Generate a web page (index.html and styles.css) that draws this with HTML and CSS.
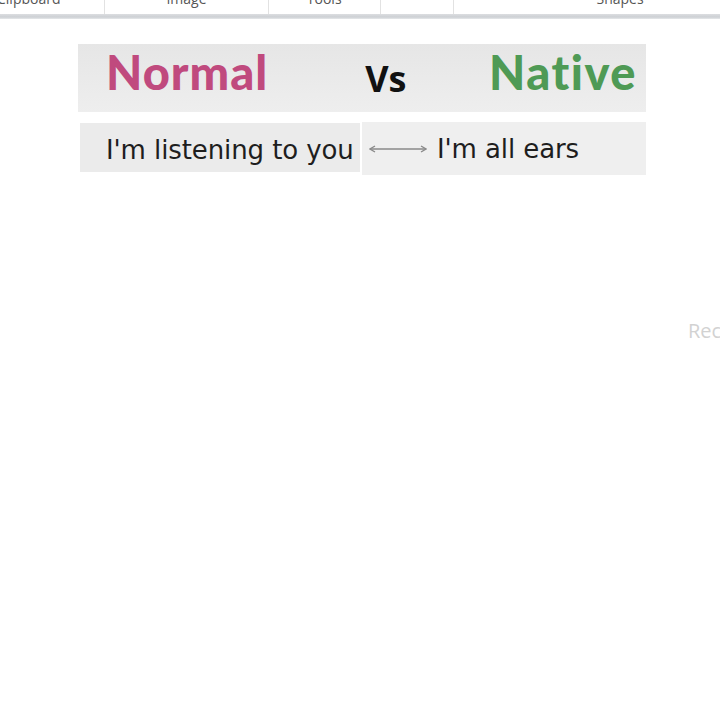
FILE: index.html
```html
<!DOCTYPE html>
<html>
<head>
<meta charset="utf-8">
<link rel="stylesheet" href="styles.css">
</head>
<body>
<div class="toolbar">
  <div class="group g1"><span>Clipboard</span></div>
  <div class="group g2"><span>Image</span></div>
  <div class="group g3"><span>Tools</span></div>
  <div class="group g4"></div>
  <div class="group g5"><span>Shapes</span></div>
</div>
<div class="rule"></div>
<div class="canvas">
  <div class="card">
    <div class="header">
      <span class="normal">Normal</span>
      <span class="vs">Vs</span>
      <span class="native">Native</span>
    </div>
    <div class="row">
      <div class="cell left">I'm listening to you</div>
      <div class="cell right">
        <svg class="arrow" width="58" height="10" viewBox="0 0 58 10">
          <path d="M1 5 H57" stroke="#8a8a8a" stroke-width="1.4"/>
          <path d="M6 2 L1 5 L6 8" fill="none" stroke="#8a8a8a" stroke-width="1.4"/>
          <path d="M52 2 L57 5 L52 8" fill="none" stroke="#8a8a8a" stroke-width="1.4"/>
        </svg>
        <span>I'm all ears</span>
      </div>
    </div>
  </div>
  <div class="rec">Rec</div>
</div>
</body>
</html>
```
FILE: styles.css
```css
html, body {
  margin: 0;
  padding: 0;
  background: #ffffff;
  width: 720px;
  height: 720px;
  overflow: hidden;
}
.toolbar {
  display: flex;
  height: 14px;
  background: #ffffff;
  overflow: hidden;
  font-family: "Open Sans", sans-serif;
  font-size: 14px;
  color: #555;
}
.group {
  position: relative;
  border-right: 1px solid #e2e2e2;
  display: flex;
  justify-content: center;
}
.group span {
  margin-top: -11px;
  line-height: 20px;
}
.g1 { width: 105px; justify-content: flex-start; }
.g1 span { margin-left: -3px; }
.g2 { width: 163px; }
.g3 { width: 112px; }
.g4 { width: 73px; }
.g5 { width: 267px; border-right: none; justify-content: flex-start; }
.g5 span { margin-left: 142px; }
.rule {
  height: 5px;
  background: linear-gradient(#dcdee1, #cdd0d4 60%, #e6e8ea);
}
.canvas {
  position: relative;
  height: 701px;
  background: #ffffff;
}
.card {
  margin-left: 78px;
  padding-top: 25px;
  width: 568px;
}
.header {
  height: 68px;
  background: linear-gradient(#e6e6e6, #eeeeee);
  display: flex;
  align-items: center;
  font-family: "Lato", sans-serif;
  font-weight: 900;
}
.normal {
  margin-left: 28px;
  font-size: 47px;
  color: #c04a7e;
  letter-spacing: 1px;
  margin-top: -12px;
}
.vs {
  margin-left: 97px;
  font-family: "Open Sans", sans-serif;
  font-weight: 700;
  font-size: 36px;
  color: #111;
  margin-top: 0px;
}
.native {
  margin-left: auto;
  margin-right: 9px;
  font-size: 47px;
  color: #4f9a55;
  letter-spacing: 1.5px;
  margin-top: -12px;
}
.row {
  display: flex;
  margin-top: 10px;
  gap: 2px;
}
.cell {
  display: flex;
  align-items: center;
  font-family: "DejaVu Sans", sans-serif;
  font-size: 26px;
  color: #1e1e1e;
}
.left {
  width: 280px;
  height: 49px;
  margin-left: 2px;
  background: #ebebeb;
  padding-left: 26px;
  box-sizing: border-box;
  margin-top: 1px;
  padding-top: 4px;
}
.left, .right span { letter-spacing: -0.1px; }
.right {
  width: 284px;
  height: 53px;
  background: #efefef;
  padding-left: 7px;
  box-sizing: border-box;
}
.arrow {
  margin-right: 10px;
}
.rec {
  position: absolute;
  left: 688px;
  top: 298px;
  font-family: "Open Sans", sans-serif;
  font-size: 20px;
  color: #d2d2d2;
}
```
